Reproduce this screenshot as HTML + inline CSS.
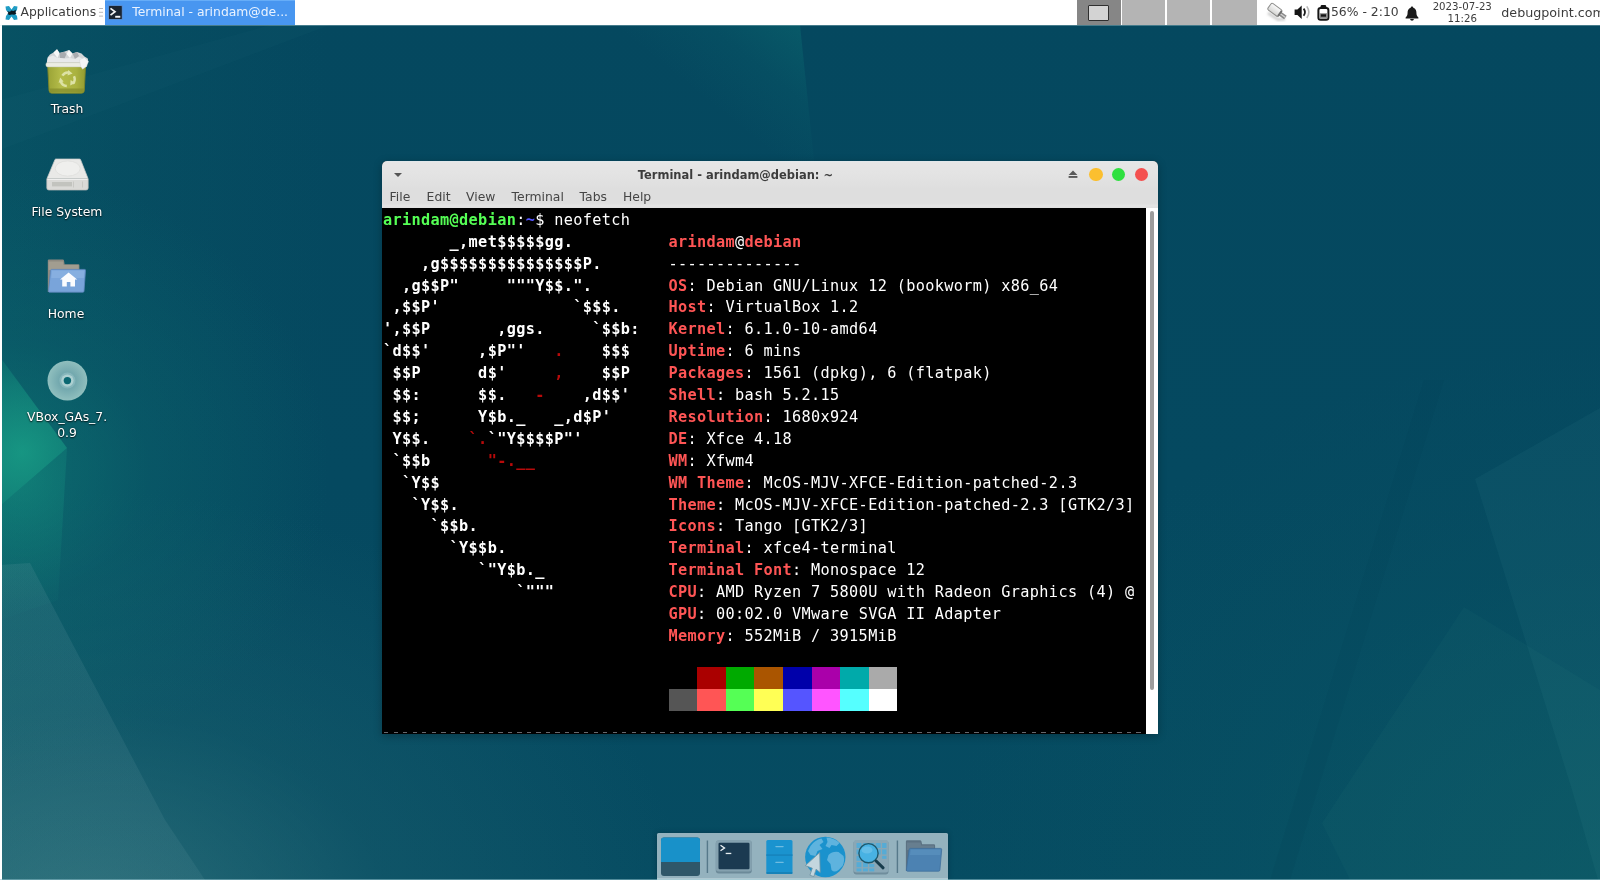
<!DOCTYPE html>
<html lang="en">
<head>
<meta charset="utf-8">
<title>Xfce desktop - neofetch</title>
<style>
*{box-sizing:border-box;margin:0;padding:0}
html,body{width:1600px;height:880px;overflow:hidden;background:#064a62}
body{position:relative;font-family:"DejaVu Sans","Liberation Sans",sans-serif;font-size:12.38px;color:#3a3a3a}
.abs{position:absolute}
#panel,#win,#icons{will-change:transform}
#wall{position:absolute;left:0;top:0;width:1600px;height:880px;
 background:
  radial-gradient(ellipse 330px 300px at 0px 470px, rgba(16,125,118,.62), rgba(14,110,112,.28) 45%, rgba(12,100,108,0) 100%),
  radial-gradient(ellipse 600px 440px at 90px 930px, rgba(60,125,132,.62), rgba(36,104,116,.30) 50%, rgba(30,100,112,0) 100%),
  radial-gradient(ellipse 700px 560px at 1640px 900px, rgba(14,98,104,.46), rgba(12,92,102,.18) 60%, rgba(12,92,102,0) 100%),
  linear-gradient(90deg, rgba(16,112,112,.24) 0, rgba(16,112,112,.1) 150px, rgba(16,112,112,0) 330px),
  linear-gradient(180deg,#05485f 0%,#054960 55%,#064c62 100%);}
#wallsvg{position:absolute;left:0;top:0}
#leftedge{left:0;top:0;width:2.3px;height:880px;background:#fff}
#botedge{left:0;top:879px;width:1600px;height:1px;background:rgba(140,190,200,.55)}
/* panel */
#panel{left:0;top:0;width:1600px;height:25px;background:#fff;box-shadow:0 .6px 0 rgba(200,225,232,.55)}
#panel .t{position:absolute;white-space:nowrap;line-height:15px}
#task{left:105.3px;top:0;width:189.6px;height:25px;background:#4896f0;box-shadow:inset 0 1px 0 #66adf8}
.pg{top:0;height:25px;background:#b4b4b4}
/* desktop icons */
.lbl{position:absolute;color:#fff;text-align:center;white-space:nowrap;line-height:15.7px;text-shadow:0 1px 1.5px rgba(0,0,0,.75),0 0 2px rgba(0,0,0,.45)}
/* window */
#win{left:382px;top:161px;width:776px;height:572.5px;border-radius:5px 5px 0 0;background:#000;overflow:hidden;box-shadow:0 2px 9px rgba(0,0,0,.28)}
#tbar{left:0;top:0;width:776px;height:47px;background:linear-gradient(180deg,#dfe9ee 0,#e6e6e6 1.2px,#e3e3e3 30%,#dedede 60%,#dedede 90%,#e4e4e4 95%,#e0e0e0 100%)}
#title{left:0;top:5.6px;width:706.8px;text-align:center;font-weight:bold;font-size:11.48px;line-height:16px;color:#3c3c3c}
.mi{position:absolute;top:29.1px;line-height:15px;color:#454545;white-space:nowrap}
.wb{position:absolute;top:6.8px;width:13.4px;height:13.4px;border-radius:50%}
#term{left:0;top:46.7px;width:764px;height:526px;background:#000}
#sb{left:763.6px;top:46.7px;width:12.4px;height:526px;background:#fff}
#thumb{left:4px;top:3px;width:4.8px;height:479px;background:#9c9c9c;border-radius:2.4px}
pre{position:absolute;left:1px;top:2.1px;font-family:"DejaVu Sans Mono","Liberation Mono",monospace;font-size:15.238px;line-height:21.905px;letter-spacing:0.3497px;color:#fff;white-space:pre;font-variant-ligatures:none}
pre b{font-weight:bold}
.g{color:#55ff55}.bl{color:#5555ff}.r{color:#ff5555}.dr{color:#b80a0a}
.cb{position:absolute;width:28.6px;height:21.95px}
/* dock */
#dock{left:656.5px;top:833px;width:291px;height:47px;background:#94b2be;border-radius:1.5px 1.5px 0 0;box-shadow:0 0 5px rgba(0,25,40,.38)}
</style>
</head>
<body>
<div id="wall"></div>
<svg id="wallsvg" width="1600" height="880" viewBox="0 0 1600 880">
 <defs>
  <radialGradient id="wg1" gradientUnits="userSpaceOnUse" cx="22" cy="452" r="120"><stop offset="0" stop-color="#1aa489" stop-opacity=".75"/><stop offset=".55" stop-color="#179a84" stop-opacity=".45"/><stop offset="1" stop-color="#138a7c" stop-opacity=".12"/></radialGradient>
  <radialGradient id="wg2" gradientUnits="userSpaceOnUse" cx="20" cy="480" r="150"><stop offset="0" stop-color="#179a84" stop-opacity=".4"/><stop offset="1" stop-color="#138a7c" stop-opacity="0"/></radialGradient>
  <linearGradient id="wg3" gradientUnits="userSpaceOnUse" x1="0" y1="565" x2="0" y2="880"><stop offset="0" stop-color="#86aeb6" stop-opacity=".13"/><stop offset="1" stop-color="#8ab6bb" stop-opacity=".10"/></linearGradient>
  <linearGradient id="wg4" gradientUnits="userSpaceOnUse" x1="806" y1="26" x2="730" y2="120"><stop offset="0" stop-color="#15a08c" stop-opacity=".20"/><stop offset=".5" stop-color="#15a08c" stop-opacity=".07"/><stop offset="1" stop-color="#15a08c" stop-opacity="0"/></linearGradient>
 </defs>
 <polygon points="560,25 800,25 816,180 700,180" fill="url(#wg4)"/>
 <polygon points="0,357 67,448 0,506" fill="url(#wg1)"/>
 <polygon points="0,506 67,448 58,600 0,620" fill="url(#wg2)"/>
 <polygon points="0,565 30,563 165,820 205,880 0,880" fill="url(#wg3)"/>
 <polygon points="0,150 330,25 270,25 0,100" fill="rgba(120,190,200,.028)"/>
 <polygon points="1475,479 1600,408 1600,880 1598,880 1572,790" fill="rgba(110,180,180,.06)"/>
 <polygon points="1322,823 1464,607 1600,690 1600,880 1350,880" fill="rgba(90,180,170,.045)"/>
 <polygon points="1424,380 1444,380 1290,880 1270,880" fill="rgba(0,30,50,.05)"/>
</svg>
<div id="leftedge" class="abs"></div>

<!-- top panel -->
<div id="panel" class="abs">
 <svg class="abs" style="left:3.5px;top:5px" width="15" height="16" viewBox="0 0 15 16">
  <path d="M1.5 1.5 L5 1 L7.5 4.5 L10 1 L13.5 1.5 L13 5 L10.5 8 L13 11 L13.5 14.5 L10 15 L7.5 11.5 L5 15 L1.5 14.5 L2 11 L4.5 8 L2 5 Z" fill="#1f9cc4"/>
  <path d="M3.2 6.2 L6 6.8 L7.2 5.6 L9.5 6 L11.8 4.8 L11.6 7.6 L12.4 8.6 L10.2 9.8 L8 9.4 L5.6 9.9 L3.4 9 L4.6 8 Z" fill="#0a1820"/>
 </svg>
 <span class="t" style="left:20.5px;top:4.9px;color:#3c3c3c">Applications</span>
 <div class="abs" style="left:99.3px;top:8px;width:3.6px;height:1px;background:#b9b9b9;box-shadow:0 3.8px 0 #b9b9b9,0 7.6px 0 #b9b9b9"></div>
 <div id="task" class="abs">
  <svg class="abs" style="left:2px;top:4px" width="18" height="18" viewBox="107 4 18 18">
   <rect x="108" y="5" width="14.8" height="15" rx="1.2" fill="#5d83bb" opacity=".6"/>
   <rect x="109" y="6" width="12.8" height="13" rx=".6" fill="#1a2430"/>
   <path d="M110.5 8.4 L115 11.8 L110.5 15.1" stroke="#f4f4f4" stroke-width="1.7" fill="none"/>
   <rect x="115.2" y="15.8" width="5.1" height="1.9" fill="#f7f7f7"/>
  </svg>
  <span class="t" style="left:27px;top:4.9px;color:#eaf3ff">Terminal - arindam@de...</span>
 </div>
 <div class="abs pg" style="left:1077px;width:44px;background:#868686"></div>
 <div class="abs" style="left:1087.5px;top:5px;width:21.5px;height:16px;background:#d3d3d3;border:1.3px solid #2f2f2f;border-radius:1px"></div>
 <div class="abs pg" style="left:1122.3px;width:43px"></div>
 <div class="abs pg" style="left:1167px;width:43px"></div>
 <div class="abs pg" style="left:1211.7px;width:45px"></div>
 <!-- network plug -->
 <svg class="abs" style="left:1262px;top:0" width="30" height="25" viewBox="1262 0 30 25">
  <defs><linearGradient id="pg1" x1="0" y1="0" x2="0" y2="1"><stop offset="0" stop-color="#fbfbfb"/><stop offset="1" stop-color="#d4d4d2"/></linearGradient>
  <filter id="pbl" x="-30%" y="-30%" width="160%" height="160%"><feGaussianBlur stdDeviation="1.3"/></filter></defs>
  <path d="M1268 13 L1278 19.5 L1285 19" stroke="#9a9a9a" stroke-width="3" fill="none" opacity=".45" filter="url(#pbl)"/>
  <g transform="rotate(36 1274.5 9.6)">
   <rect x="1268.3" y="5.6" width="13.2" height="8" rx="1.6" fill="url(#pg1)" stroke="#8e8e8c" stroke-width="1"/>
   <rect x="1281.4" y="7.4" width="6.6" height="4.4" fill="#8a8a8a"/>
   <rect x="1281.6" y="8.9" width="6.4" height="1.2" fill="#d2d2d2"/>
   <rect x="1280.2" y="6.4" width="1.8" height="6.4" fill="#6f6f6f"/>
  </g>
 </svg>
 <!-- volume -->
 <svg class="abs" style="left:1292px;top:3px" width="22" height="19" viewBox="1292 3 22 19">
  <path d="M1294.6 9.4 H1297.4 L1301.7 5.4 V19 L1297.4 15 H1294.6 Z" fill="#151515"/>
  <path d="M1303.6 8.6 Q1306.4 12.2 1303.6 15.8" stroke="#1c1c1c" stroke-width="1.8" fill="none"/>
  <path d="M1306.8 6.4 Q1311 12.2 1306.8 18" stroke="#b4b4b4" stroke-width="1.6" fill="none"/>
 </svg>
 <!-- battery -->
 <svg class="abs" style="left:1315px;top:3px" width="17" height="20" viewBox="1315 3 17 20">
  <rect x="1320.6" y="4.9" width="5.6" height="3.6" rx="1.3" fill="#151515"/>
  <rect x="1318.4" y="8" width="10" height="11.7" rx="2.3" fill="#fff" stroke="#151515" stroke-width="2"/>
  <rect x="1319.4" y="13.2" width="8" height="5.5" fill="#8c8c8c"/>
  <rect x="1320.8" y="14.3" width="5.2" height="2.4" fill="#151515"/>
 </svg>
 <span class="t" style="left:1331px;top:5px;color:#3c3c3c">56% - 2:10</span>
 <!-- bell -->
 <svg class="abs" style="left:1404.5px;top:5.5px" width="14" height="15" viewBox="0 0 14 15">
  <path d="M7 0.4 C7.9 0.4 8.3 1 8.3 1.7 C10.6 2.4 11.4 4.4 11.4 6.6 C11.4 9.2 12 10.4 13.4 11.6 V12.4 H0.6 V11.6 C2 10.4 2.6 9.2 2.6 6.6 C2.6 4.4 3.4 2.4 5.7 1.7 C5.7 1 6.1 0.4 7 0.4 Z" fill="#1a1a1a"/>
  <path d="M5.2 13 H8.8 C8.8 14 8 14.7 7 14.7 C6 14.7 5.2 14 5.2 13 Z" fill="#1a1a1a"/>
 </svg>
 <span class="t" style="left:1432px;top:1.2px;font-size:10.2px;line-height:11.9px;color:#3c3c3c;text-align:center;width:60.5px">2023-07-23<br>11:26</span>
 <span class="t" style="left:1501.3px;top:4.9px;font-size:12.7px;color:#3c3c3c">debugpoint.com</span>
</div>

<!-- desktop icons -->
<div id="icons" class="abs" style="left:0;top:0;width:130px;height:460px">
 <!-- trash -->
 <svg class="abs" style="left:40px;top:44px" width="56" height="54" viewBox="40 44 56 54">
  <defs><linearGradient id="tb" x1="0" y1="0" x2="1" y2="0"><stop offset="0" stop-color="#9aa336"/><stop offset=".35" stop-color="#b4bc49"/><stop offset=".75" stop-color="#aab23f"/><stop offset="1" stop-color="#939b30"/></linearGradient></defs>
  <path d="M47.6 64.5 H85.6 L84.3 90.6 Q84.2 93.2 81.6 93.2 H51.8 Q49.2 93.2 49 90.6 Z" fill="url(#tb)" stroke="#7c8429" stroke-width=".9"/>
  <path d="M49.6 90.2 Q49.8 92.4 52 92.4 H81.4 Q83.6 92.4 83.7 90.2 L83.8 88.4 H49.5 Z" fill="#858d2c" opacity=".75"/>
  <path d="M46.8 62.5 L47.6 57.5 L50 54.5 L53.5 52.5 L57 49.2 L59.5 53 L64 51.8 L69 50 L72.5 53.5 L77 52 L81.5 53.5 L84.5 56.5 L87.8 58.5 L88.4 62 L86 66 H46.8 Z" fill="#d3d5d7"/>
  <path d="M53.5 52.5 L57 49.2 L59.5 53 L57.5 58 Z M69 50 L72.5 53.5 L70 58 L66.5 54 Z" fill="#f7f7f7"/>
  <path d="M59.5 53 L64 51.8 L66.5 54 L64.5 58.5 L60 58 Z M72.5 53.5 L77 52 L79 56 L75 59 Z" fill="#a9acb0"/>
  <path d="M48 57.5 L53 55.5 L57.5 58 L60 58 L64.5 58.5 L70 58 L75 59 L79 57 L83 59 L85 62 H47 Z" fill="#e8e9ea"/>
  <rect x="46" y="62.6" width="40.8" height="4.3" rx="1.6" fill="#ecede4" stroke="#c5c7b4" stroke-width=".5"/>
  <path d="M79.5 59.8 L84.6 57.6 L88.4 61.6 L86.4 66.4 L82.6 69.2 L80.6 66.2 Z" fill="#f4f4f5" stroke="#d0d2d4" stroke-width=".4"/>
  <g fill="none" stroke="#dde2a4" stroke-width="2.5" stroke-linecap="butt">
   <path d="M62.4 75.6 Q64.8 71.6 69.2 72.6"/>
   <path d="M74 76.2 Q76 80.4 72.8 83.6"/>
   <path d="M66.8 86 Q62 85.8 60.8 81.4"/>
  </g>
  <g fill="#dde2a4">
   <path d="M68.2 70 L72.6 73.4 L67.6 75.6 Z"/>
   <path d="M75.2 83 L70.2 85.4 L70.6 80 Z"/>
   <path d="M58.6 82.8 L60.2 77.4 L63.6 81.4 Z"/>
  </g>
 </svg>
 <div class="lbl" style="left:17px;top:101.8px;width:100px">Trash</div>
 <!-- file system -->
 <svg class="abs" style="left:44px;top:155.7px" width="48" height="38" viewBox="0 0 48 38">
  <path d="M11 3.4 Q11.4 3 12 3 H35.5 Q36.1 3 36.5 3.4 L44 22.5 H3 Z" fill="#e9e9e7" stroke="#cfcfcd" stroke-width=".7"/>
  <ellipse cx="23.7" cy="12.5" rx="12.5" ry="7.6" fill="#efefed" stroke="#dededc" stroke-width=".8"/>
  <path d="M2.8 22.8 H44.2 V32 Q44.2 34 42.2 34 H4.8 Q2.8 34 2.8 32 Z" fill="#dadad7" stroke="#bdbdba" stroke-width=".7"/>
  <rect x="8" y="26" width="20" height="4.4" fill="#c2c3be"/>
  <rect x="29" y="25.5" width="1" height="6" fill="#c8c8c4"/><rect x="38" y="25.5" width="1" height="6" fill="#c8c8c4"/>
  <rect x="3.4" y="22.8" width="40.2" height="1" fill="#f6f6f5"/>
 </svg>
 <div class="lbl" style="left:17px;top:204.8px;width:100px">File System</div>
 <!-- home -->
 <svg class="abs" style="left:44px;top:256px" width="46" height="40" viewBox="0 0 46 40">
  <path d="M3.8 4.6 Q3.8 3.6 4.8 3.6 H18.8 Q19.8 3.6 20 4.6 L20.6 8.2 H34.4 Q35.4 8.2 35.4 9.2 V36 H3.8 Z" fill="#8e8a81"/>
  <path d="M4.6 5.4 H19 L19.6 9 H34.6 V14 H4.6 Z" fill="#a8a193" opacity=".8"/>
  <path d="M7.6 13.4 H40.6 Q41.6 13.4 41.5 14.4 L40 35.2 Q39.9 36.2 38.9 36.2 H5.4 Q4.4 36.2 4.5 35.2 L6.6 14.4 Q6.7 13.4 7.6 13.4 Z" fill="#79a4da" stroke="#5d87bd" stroke-width=".8"/>
  <path d="M8 14.4 H40.4 L39.8 22 H7.3 Z" fill="#8db3e2" opacity=".7"/>
  <path d="M24.6 16.6 L33.2 23.6 H31 V30.6 H26.4 V26 H22.8 V30.6 H18.2 V23.6 H16 Z" fill="#fbfcfe"/>
 </svg>
 <div class="lbl" style="left:16px;top:307px;width:100px">Home</div>
 <!-- disc -->
 <svg class="abs" style="left:45px;top:358px" width="46" height="46" viewBox="0 0 46 46">
  <defs><radialGradient id="dg" cx="50%" cy="50%" r="50%"><stop offset="0" stop-color="#7fb0b6"/><stop offset=".45" stop-color="#86b6ba"/><stop offset="1" stop-color="#a6cfcc"/></radialGradient></defs>
  <circle cx="22.4" cy="22.6" r="19.9" fill="url(#dg)" opacity=".86"/>
  <circle cx="22.4" cy="22.6" r="8" fill="#8fbcc2" opacity=".7"/>
  <circle cx="22.4" cy="22.6" r="6.2" fill="#b6d6d6" opacity=".8"/>
  <circle cx="22.4" cy="22.6" r="3.7" fill="#0b6872"/>
 </svg>
 <div class="lbl" style="left:17px;top:410px;width:100px">VBox_GAs_7.<br>0.9</div>
</div>

<!-- terminal window -->
<div id="win" class="abs">
 <div id="tbar" class="abs"></div>
 <svg class="abs" style="left:11px;top:11px" width="10" height="6" viewBox="0 0 10 6"><path d="M1 1 H9 L5 5 Z" fill="#555"/></svg>
 <div id="title" class="abs">Terminal - arindam@debian: ~</div>
 <svg class="abs" style="left:686px;top:8.5px" width="10" height="9" viewBox="0 0 10 9"><path d="M5 0.6 L9.4 5 H0.6 Z" fill="#5a5a5a"/><rect x=".6" y="6" width="8.8" height="1.9" fill="#5a5a5a"/></svg>
 <div class="wb" style="left:707.2px;background:#fbbf2f"></div>
 <div class="wb" style="left:730.1px;background:#2fe040"></div>
 <div class="wb" style="left:752.9px;background:#f4504f"></div>
 <span class="mi" style="left:7.6px">File</span>
 <span class="mi" style="left:44.6px">Edit</span>
 <span class="mi" style="left:84px">View</span>
 <span class="mi" style="left:129.6px">Terminal</span>
 <span class="mi" style="left:197.6px">Tabs</span>
 <span class="mi" style="left:241px">Help</span>
 <div id="term" class="abs">
<pre><b class="g">arindam@debian</b>:<b class="bl">~</b>$ neofetch
<b>       _,met$$$$$gg.          </b><b class="r">arindam</b>@<b class="r">debian</b>
<b>    ,g$$$$$$$$$$$$$$$P.       </b>--------------
<b>  ,g$$P"     """Y$$.".        </b><b class="r">OS</b>: Debian GNU/Linux 12 (bookworm) x86_64
<b> ,$$P'              `$$$.     </b><b class="r">Host</b>: VirtualBox 1.2
<b>',$$P       ,ggs.     `$$b:   </b><b class="r">Kernel</b>: 6.1.0-10-amd64
<b>`d$$'     ,$P"'   <span class="dr">.</span>    $$$    </b><b class="r">Uptime</b>: 6 mins
<b> $$P      d$'     <span class="dr">,</span>    $$P    </b><b class="r">Packages</b>: 1561 (dpkg), 6 (flatpak)
<b> $$:      $$.   <span class="dr">-</span>    ,d$$'    </b><b class="r">Shell</b>: bash 5.2.15
<b> $$;      Y$b._   _,d$P'      </b><b class="r">Resolution</b>: 1680x924
<b> Y$$.    <span class="dr">`.</span>`"Y$$$$P"'         </b><b class="r">DE</b>: Xfce 4.18
<b> `$$b      <span class="dr">"-.__</span>              </b><b class="r">WM</b>: Xfwm4
<b>  `Y$$                        </b><b class="r">WM Theme</b>: McOS-MJV-XFCE-Edition-patched-2.3
<b>   `Y$$.                      </b><b class="r">Theme</b>: McOS-MJV-XFCE-Edition-patched-2.3 [GTK2/3]
<b>     `$$b.                    </b><b class="r">Icons</b>: Tango [GTK2/3]
<b>       `Y$$b.                 </b><b class="r">Terminal</b>: xfce4-terminal
<b>          `"Y$b._             </b><b class="r">Terminal Font</b>: Monospace 12
<b>              `"""            </b><b class="r">CPU</b>: AMD Ryzen 7 5800U with Radeon Graphics (4) @
                              <b class="r">GPU</b>: 00:02.0 VMware SVGA II Adapter
                              <b class="r">Memory</b>: 552MiB / 3915MiB
</pre>
  <div class="abs" style="left:1.7px;top:524.2px;width:761px;height:1.1px;background:repeating-linear-gradient(90deg,rgba(205,205,215,.5) 0,rgba(205,205,215,.5) 4.4px,transparent 4.4px,transparent 9.5238px)"></div>
  <div id="blocks" class="abs" style="left:0;top:-0.5px">
   <div class="cb" style="left:315.29px;top:460.00px;background:#aa0000"></div>
   <div class="cb" style="left:343.86px;top:460.00px;background:#00aa00"></div>
   <div class="cb" style="left:372.43px;top:460.00px;background:#aa5500"></div>
   <div class="cb" style="left:401.00px;top:460.00px;background:#0000aa"></div>
   <div class="cb" style="left:429.57px;top:460.00px;background:#aa00aa"></div>
   <div class="cb" style="left:458.14px;top:460.00px;background:#00aaaa"></div>
   <div class="cb" style="left:486.71px;top:460.00px;background:#aaaaaa"></div>
   <div class="cb" style="left:286.71px;top:481.91px;background:#555555"></div>
   <div class="cb" style="left:315.29px;top:481.91px;background:#ff5555"></div>
   <div class="cb" style="left:343.86px;top:481.91px;background:#55ff55"></div>
   <div class="cb" style="left:372.43px;top:481.91px;background:#ffff55"></div>
   <div class="cb" style="left:401.00px;top:481.91px;background:#5555ff"></div>
   <div class="cb" style="left:429.57px;top:481.91px;background:#ff55ff"></div>
   <div class="cb" style="left:458.14px;top:481.91px;background:#55ffff"></div>
   <div class="cb" style="left:486.71px;top:481.91px;background:#ffffff"></div>
  </div>
 </div>
 <div id="sb" class="abs"><div id="thumb" class="abs"></div></div>
</div>

<!-- dock -->
<div id="dock" class="abs">
 <svg class="abs" style="left:0;top:0" width="291" height="47" viewBox="656.5 833 291 47">
  <rect x="656.5" y="878.5" width="291" height="1.5" fill="#c9dde4"/>
  <!-- show desktop -->
  <rect x="660.5" y="837.5" width="39" height="38.5" rx="3" fill="#2f5769"/>
  <path d="M660.5 862 V840.5 Q660.5 837.5 663.5 837.5 H696.5 Q699.5 837.5 699.5 840.5 V862 Z" fill="#1891c9"/>
  <rect x="706.2" y="840.5" width="1.4" height="32.5" fill="#56798a"/>
  <!-- terminal -->
  <rect x="715.3" y="840.6" width="36" height="33" rx="3" fill="#6c8a99"/>
  <rect x="715.3" y="840.3" width="36" height="31.3" rx="3" fill="#84a1af"/>
  <rect x="718" y="842.8" width="31" height="26.4" rx="1.2" fill="#1b3a51"/>
  <path d="M720 845.3 L724 848 L720 850.7" stroke="#f2f6f8" stroke-width="1.3" fill="none"/>
  <rect x="725.2" y="852.8" width="5.6" height="1.3" fill="#e6edf0"/>
  <!-- file cabinet -->
  <rect x="765.8" y="840" width="26.2" height="34" rx="1.5" fill="#1a93cf"/>
  <rect x="765.8" y="854.3" width="26.2" height="1.6" fill="#1784bd"/>
  <rect x="765.8" y="872" width="26.2" height="2" rx="1" fill="#1682b8"/>
  <rect x="774.8" y="845.9" width="8.4" height="1.3" rx=".6" fill="#6fbbe0"/>
  <rect x="774.8" y="861.7" width="8.4" height="1.3" rx=".6" fill="#6fbbe0"/>
  <!-- web browser -->
  <circle cx="824.8" cy="857" r="20.2" fill="#1a92cd"/>
  <g fill="#5eb3de">
   <path d="M810 846 Q814 840 821 838.5 L823 842 L819 845 L822 849 L817 851 L815 856 L810 855 L807.5 851 Z"/>
   <path d="M826 837.5 Q834 838 839 843 L836 846 L831 845 L829 848 L825 846 L827 842 Z"/>
   <path d="M828 855 Q832 851 838 852 L843 856 Q844.5 861 842 866 L838 870 Q834 873 831 870 L830 864 L826.5 860 Z"/>
   <path d="M812 864 L816 862 L818 866 L815 872 Q812 869 812 864 Z"/>
  </g>
  <path d="M819.2 852.6 L819.7 872.6 L815.6 869.2 L813.3 876.6 L809.4 875.2 L811.8 868.2 L804.8 865.6 Z" fill="#c3d6de" stroke="#6f93a3" stroke-width=".8"/>
  <!-- app finder -->
  <rect x="853" y="840.6" width="35" height="33.8" rx="3" fill="#6f8d9c"/>
  <rect x="853" y="840" width="35" height="32.6" rx="3" fill="#8aa7b5"/>
  <g fill="#43ade2" opacity=".72">
   <rect x="856" y="843" width="5" height="5"/><rect x="862.4" y="843" width="5" height="5"/><rect x="868.8" y="843" width="5" height="5"/><rect x="875.2" y="843" width="5" height="5"/><rect x="881.6" y="843" width="4.4" height="5"/>
   <rect x="856" y="849.4" width="5" height="5"/><rect x="875.2" y="849.4" width="5" height="5"/><rect x="881.6" y="849.4" width="4.4" height="5"/>
   <rect x="856" y="855.8" width="5" height="5"/><rect x="881.6" y="855.8" width="4.4" height="3"/>
   <rect x="856" y="862.2" width="5" height="5"/><rect x="862.4" y="862.2" width="5" height="5"/><rect x="868.8" y="864" width="5" height="3.2"/>
   <rect x="856" y="868.4" width="5" height="3"/><rect x="862.4" y="868.4" width="5" height="3"/><rect x="868.8" y="868.4" width="5" height="3"/>
  </g>
  <circle cx="868" cy="853.2" r="9.6" fill="#48b2e3" stroke="#1d586c" stroke-width="1.4"/>
  <ellipse cx="866.5" cy="850" rx="5.5" ry="3.6" fill="#7cc8ec" opacity=".55"/>
  <path d="M875.6 861 L882.6 867.8" stroke="#173c4c" stroke-width="3" stroke-linecap="round"/>
  <rect x="896.2" y="840.5" width="1.4" height="32.5" fill="#56798a"/>
  <!-- folder -->
  <path d="M905.4 841.4 Q905.4 840.2 906.6 840.2 H919.4 Q920.6 840.2 920.9 841.3 L921.6 844.2 H933.4 Q934.6 844.2 934.6 845.4 V871 H905.4 Z" fill="#5b7182"/>
  <path d="M906.4 842.4 H920 L920.7 845.4 H933.6 V850 H906.4 Z" fill="#6c8494" opacity=".7"/>
  <path d="M910 848.4 H940 Q941.3 848.4 941.2 849.7 L939.4 870 Q939.3 871.2 938.1 871.2 H907 Q905.8 871.2 905.9 870 L908.6 849.6 Q908.8 848.4 910 848.4 Z" fill="#4c82b2" stroke="#3f6f9c" stroke-width=".8"/>
  <path d="M910.2 849.4 H940.2 L939.7 855 H909.5 Z" fill="#5b91bf" opacity=".7"/>
 </svg>
</div>
<div id="botedge" class="abs"></div>
</body>
</html>
